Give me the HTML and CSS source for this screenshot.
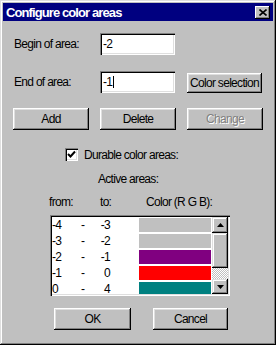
FILE: index.html
```html
<!DOCTYPE html>
<html lang="en">
<head>
    <meta charset="UTF-8">
    <title>Configure color areas</title>
    <link rel="stylesheet" href="styles.css">
</head>
<body>
    <div class="window">
        <div class="titlebar">
            <span class="title">Configure color areas</span>
            <span class="close">
                <svg width="8" height="7" viewBox="0 0 8 7"><path d="M0.5 0.5 L7.5 6.5 M7.5 0.5 L0.5 6.5" stroke="#000" stroke-width="1.6"/></svg>
            </span>
        </div>
        <div class="content">
            <div class="row row1">
                <label class="lbl">Begin of area:</label>
                <div class="field">-2</div>
            </div>
            <div class="row row2">
                <label class="lbl">End of area:</label>
                <div class="field">-1<span class="caret"></span></div>
                <button class="btn btn-sel">Color selection</button>
            </div>
            <div class="row row3">
                <button class="btn">Add</button>
                <button class="btn">Delete</button>
                <button class="btn disabled">Change</button>
            </div>
            <div class="check-row">
                <span class="checkbox">
                    <svg width="9" height="9" viewBox="0 0 9 9"><path d="M1 4 L3.5 6.5 L8 1.5" fill="none" stroke="#000" stroke-width="2"/></svg>
                </span>
                <span>Durable color areas:</span>
            </div>
            <div class="active">Active areas:</div>
            <div class="heads">
                <span class="h-from">from:</span>
                <span class="h-to">to:</span>
                <span>Color (R G B):</span>
            </div>
            <div class="list">
                <div class="items">
                    <div class="item"><span class="c-from">-4</span><span class="c-dash">-</span><span class="c-to">-3</span><span class="swatch" style="background:#c0c0c0"></span></div>
                    <div class="item"><span class="c-from">-3</span><span class="c-dash">-</span><span class="c-to">-2</span><span class="swatch" style="background:#c0c0c0"></span></div>
                    <div class="item"><span class="c-from">-2</span><span class="c-dash">-</span><span class="c-to">-1</span><span class="swatch" style="background:#800080"></span></div>
                    <div class="item"><span class="c-from">-1</span><span class="c-dash">-</span><span class="c-to">0</span><span class="swatch" style="background:#ff0000"></span></div>
                    <div class="item"><span class="c-from">0</span><span class="c-dash">-</span><span class="c-to">4</span><span class="swatch" style="background:#008080"></span></div>
                </div>
                <div class="scrollbar">
                    <div class="sb-btn"><svg width="7" height="4" viewBox="0 0 7 4"><path d="M3.5 0 L7 4 L0 4 Z" fill="#000"/></svg></div>
                    <div class="sb-thumb"></div>
                    <div class="sb-track"></div>
                    <div class="sb-btn sb-down"><svg width="7" height="4" viewBox="0 0 7 4"><path d="M0 0 L7 0 L3.5 4 Z" fill="#000"/></svg></div>
                </div>
            </div>
            <div class="bottom">
                <button class="btn btn-ok">OK</button>
                <button class="btn btn-ok">Cancel</button>
            </div>
        </div>
    </div>
</body>
</html>
```

FILE: styles.css
```css
*{margin:0; padding:0; box-sizing:border-box;}
body{font-family:"Liberation Sans", Arial, sans-serif; font-size:12px; letter-spacing:-0.7px; color:#000; background:#c0c0c0;}
.window{width:276px; height:345px; padding:3px; background:#c0c0c0; box-shadow:inset -1px -1px #000, inset 1px 1px #dfdfdf, inset -2px -2px #808080, inset 2px 2px #fff; display:flex; flex-direction:column;}
.titlebar{height:18px; background:#000080; color:#fff; display:flex; align-items:center; justify-content:space-between; padding:0 3px 0 3px;}
.title{font-weight:bold; font-size:13px; letter-spacing:-0.9px;}
.close{width:15px; height:13px; background:#c0c0c0; display:flex; align-items:center; justify-content:center; box-shadow:inset -1px -1px #000, inset 1px 1px #fff, inset -2px -2px #808080;}
.content{flex:1; display:flex; flex-direction:column;}

.row{display:flex; align-items:center; height:22px; padding-left:11px;}
.row1{margin-top:12px;}
.row2{margin-top:16px;}
.row3{margin-top:15px; padding-left:10px; gap:11px;}
.lbl{width:86px;}
.field{width:75px; height:22px; background:#fff; padding:0 3px; display:flex; align-items:center; box-shadow:inset 1px 1px #808080, inset 2px 2px #000, inset -1px -1px #fff, inset -2px -2px #dfdfdf;}
.caret{display:inline-block; width:1px; height:12px; background:#000; margin-left:1px;}

.btn{font-family:inherit; font-size:12px; letter-spacing:-0.7px; color:#000; background:#c0c0c0; border:none; width:76px; height:22px; box-shadow:inset -1px -1px #000, inset 1px 1px #fff, inset -2px -2px #808080, inset 2px 2px #dfdfdf;}
.btn-sel{width:75px; height:20px; margin-left:12px; margin-top:2px;}
.disabled{color:#808080; text-shadow:1px 1px #fff;}

.check-row{display:flex; align-items:center; margin-top:18px; height:13px; padding-left:62px; gap:6px;}
.checkbox{width:13px; height:13px; background:#fff; display:flex; align-items:center; justify-content:center; box-shadow:inset 1px 1px #808080, inset 2px 2px #000, inset -1px -1px #fff, inset -2px -2px #dfdfdf;}

.active{margin-top:12px; line-height:13px; padding-left:95px;}
.heads{margin-top:10px; line-height:13px; padding-left:46px; display:flex;}
.h-from{width:51px;}
.h-to{width:46px;}

.list{margin-top:6px; margin-left:47px; width:180px; height:81px; background:#fff; padding:2px; display:flex; box-shadow:inset 1px 1px #808080, inset 2px 2px #000, inset -1px -1px #fff, inset -2px -2px #dfdfdf;}
.items{flex:1; overflow:hidden;}
.item{display:flex; align-items:center; height:16px;}
.c-from{width:29px;}
.c-dash{width:17px;}
.c-to{width:12px; text-align:right;}
.swatch{margin-left:29px; width:72px; height:14px;}
.scrollbar{width:16px; display:flex; flex-direction:column;}
.sb-btn{height:16px; background:#c0c0c0; display:flex; align-items:center; justify-content:center; box-shadow:inset -1px -1px #000, inset 1px 1px #dfdfdf, inset -2px -2px #808080, inset 2px 2px #fff;}
.sb-down{height:15px;}
.sb-thumb{height:35px; background:#c0c0c0; box-shadow:inset -1px -1px #000, inset 1px 1px #dfdfdf, inset -2px -2px #808080, inset 2px 2px #fff;}
.sb-track{flex:1; background:repeating-conic-gradient(#c0c0c0 0 25%, #fff 0 50%) 0 0/2px 2px;}

.bottom{margin-top:12px; display:flex; padding-left:51px; gap:22px;}
.btn-ok{width:77px;}
.bottom .btn-ok + .btn-ok{width:75px;}
```
